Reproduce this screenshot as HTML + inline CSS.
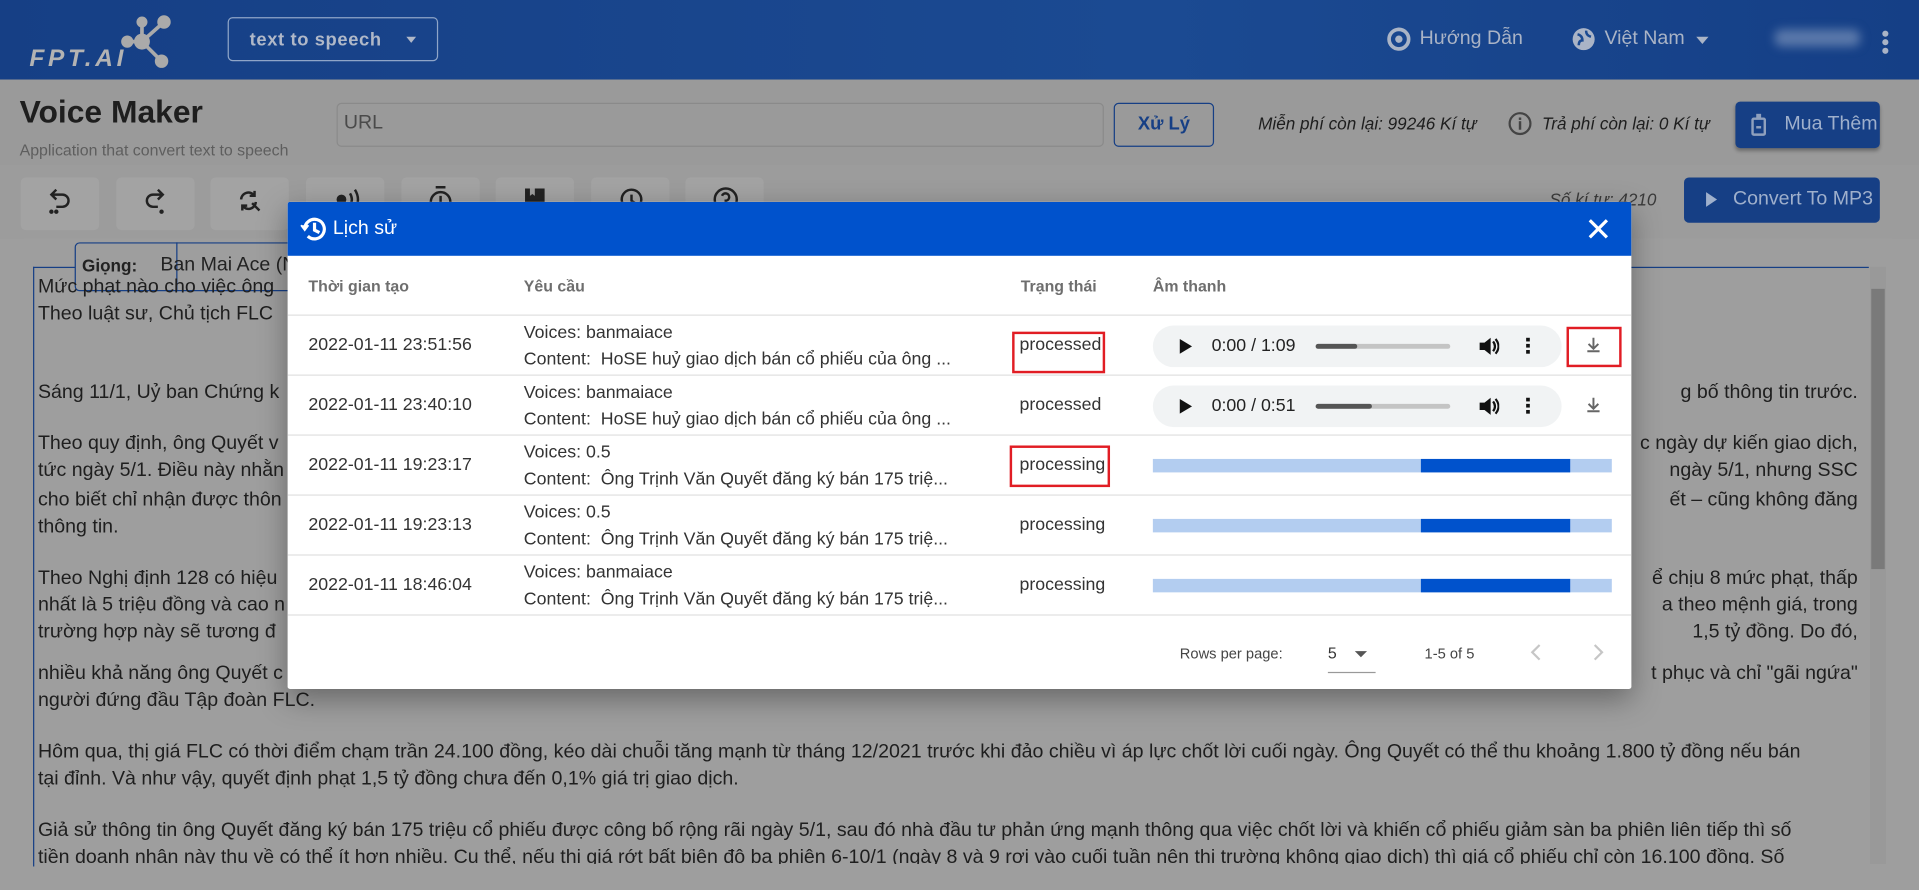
<!DOCTYPE html>
<html><head><meta charset="utf-8"><style>
*{box-sizing:border-box;margin:0;padding:0}
body{width:1919px;height:890px;overflow:hidden;background:#9e9e9e;font-family:"Liberation Sans",Arial,sans-serif;position:relative}
#w{position:absolute;left:0;top:0;width:1568px;height:727px;transform:scale(1.22385);transform-origin:0 0}
.a{position:absolute;white-space:nowrap}
.hdr{left:0;top:0;width:1568px;height:65px;background:linear-gradient(90deg,#163f85,#1b4a92 60%,#153f86);box-shadow:0 2px 6px rgba(0,0,0,.4)}
.tb{width:64px;height:43px;background:#a3a3a3;border-radius:4px;top:145px}
.tl{font-size:16px;color:#1e1e1e;left:31px}
.tr{font-size:16px;color:#1e1e1e;right:50px}
.hc{font-size:13px;font-weight:bold;color:#6e6e6e}
.c{font-size:14.5px;color:#333}
.row{position:absolute;left:0;width:1098px;height:49px;border-bottom:1px solid #e0e0e0}
.aud{position:absolute;left:707px;width:334px;height:34px;background:#f1f3f4;border-radius:17px;top:8px}
.prog{position:absolute;left:707px;width:375px;height:11px;background:#b3cdf0;top:19px}
.prog i{position:absolute;left:219px;width:122px;height:11px;background:#0052cc}
.red{position:absolute;border:2px solid #e11d24}
</style></head><body><div id="w">
<div class="a hdr"></div>
<div class="a" style="left:24px;top:37px;font-size:20px;font-weight:bold;color:#b3b3b3;letter-spacing:3px;font-style:italic">FPT.AI</div>
<svg class="a" style="left:94px;top:10px" width="46" height="48"><g stroke="#aaa" stroke-width="3" fill="#aaa"><line x1="22" y1="24" x2="40" y2="8"/><line x1="22" y1="24" x2="10" y2="24"/><line x1="22" y1="24" x2="38" y2="40"/><line x1="22" y1="24" x2="22" y2="8"/><circle cx="40" cy="8" r="4"/><circle cx="10" cy="24" r="3.5"/><circle cx="38" cy="40" r="4"/><circle cx="22" cy="8" r="3"/><circle cx="22" cy="24" r="5"/></g></svg>
<div class="a" style="left:186px;top:14px;width:172px;height:36px;border:1px solid #8fa5c8;border-radius:4px"></div>
<div class="a" style="left:204px;top:24px;font-size:15px;font-weight:bold;color:#b0b8c8;letter-spacing:.5px">text to speech</div>
<div class="a" style="left:332px;top:30px;border:4px solid transparent;border-top:5px solid #b0b8c8"></div>
<svg class="a" style="left:1133px;top:22px" width="20" height="20"><circle cx="10" cy="10" r="8" fill="none" stroke="#aab4c6" stroke-width="3"/><circle cx="10" cy="10" r="3" fill="#aab4c6"/></svg>
<div class="a" style="left:1160px;top:23px;font-size:16px;color:#aab4c6">Hướng Dẫn</div>
<svg class="a" style="left:1284px;top:22px" width="20" height="20"><circle cx="10" cy="10" r="9" fill="#aab4c6"/><path d="M5 6q4 1 4 5q-3 0-3 4M12 3q0 4 4 5" stroke="#1b4a92" stroke-width="2" fill="none"/></svg>
<div class="a" style="left:1311px;top:23px;font-size:16px;color:#aab4c6">Việt Nam</div>
<div class="a" style="left:1386px;top:30px;border:5px solid transparent;border-top:6px solid #aab4c6"></div>
<div class="a" style="left:1450px;top:24px;width:70px;height:14px;background:#5a78aa;filter:blur(4px);border-radius:6px"></div>
<div class="a" style="left:1538px;top:25px;width:5px;height:5px;border-radius:3px;background:#aab4c6;box-shadow:0 7px 0 #aab4c6,0 14px 0 #aab4c6"></div>

<div class="a" style="left:0;top:65px;width:1568px;height:70px;background:#9a9a9a"></div>
<div class="a" style="left:16px;top:76px;font-size:26px;font-weight:bold;color:#1e1e1e">Voice Maker</div>
<div class="a" style="left:16px;top:115px;font-size:13px;color:#5e5e5e">Application that convert text to speech</div>
<div class="a" style="left:275px;top:84px;width:627px;height:36px;border:1px solid #8a8a8a;border-radius:4px"></div>
<div class="a" style="left:281px;top:92px;font-size:16px;color:#4a4a4a">URL</div>
<div class="a" style="left:910px;top:84px;width:82px;height:36px;border:1px solid #163f85;border-radius:4px;font-size:15px;font-weight:bold;color:#163f85;text-align:center;line-height:34px">Xử Lý</div>
<div class="a" style="left:1028px;top:93px;font-size:14px;font-style:italic;color:#1e1e1e">Miễn phí còn lại: 99246 Kí tự</div>
<svg class="a" style="left:1232px;top:91px" width="20" height="20"><circle cx="10" cy="10" r="8.5" fill="none" stroke="#444" stroke-width="1.8"/><rect x="9" y="8" width="2" height="7" fill="#444"/><rect x="9" y="5" width="2" height="2" fill="#444"/></svg>
<div class="a" style="left:1260px;top:93px;font-size:14px;font-style:italic;color:#1e1e1e">Trả phí còn lại: 0 Kí tự</div>
<div class="a" style="left:1418px;top:83px;width:118px;height:38px;background:#163f85;border-radius:4px;box-shadow:0 2px 3px rgba(0,0,0,.3)"></div>
<svg class="a" style="left:1430px;top:92px" width="14" height="20"><rect x="2" y="5" width="10" height="13" rx="1" fill="none" stroke="#8fa0bd" stroke-width="2"/><rect x="5" y="1" width="4" height="4" fill="#8fa0bd"/><rect x="5" y="11" width="4" height="2" fill="#8fa0bd"/></svg>
<div class="a" style="left:1458px;top:93px;font-size:16px;color:#9fb0cc">Mua Thêm</div>

<div class="a" style="left:0;top:135px;width:1568px;height:60px;background:#9c9c9c"></div>
<div class="a tb" style="left:17px"></div><div class="a tb" style="left:95px"></div><div class="a tb" style="left:172px"></div><div class="a tb" style="left:250px"></div><div class="a tb" style="left:328px"></div><div class="a tb" style="left:405px"></div><div class="a tb" style="left:483px"></div><div class="a tb" style="left:560px"></div>
<svg class="a" style="left:38px;top:153px" width="22" height="24" fill="none" stroke="#222" stroke-width="2"><path d="M4 6h9a5 5 0 0 1 0 10H8M8 2 4 6l4 4"/><circle cx="4" cy="20" r=".8" fill="#222"/><circle cx="8" cy="20" r=".8" fill="#222"/></svg>
<svg class="a" style="left:116px;top:153px" width="22" height="24" fill="none" stroke="#222" stroke-width="2"><path d="M17 6H9a5 5 0 0 0 0 10h4M13 2l4 4-4 4"/><circle cx="16" cy="20" r=".8" fill="#222"/></svg>
<svg class="a" style="left:194px;top:153px" width="22" height="24" fill="none" stroke="#222" stroke-width="2"><path d="M3 10a6 6 0 0 1 11-3M15 12a6 6 0 0 1-11 3M14 3v4h-4M4 19v-4h4M12 13l6 6"/></svg>
<svg class="a" style="left:272px;top:153px" width="24" height="20"><circle cx="7" cy="10" r="4" fill="#222"/><path d="M14 5q3 5 0 10M18 2q5 8 0 16" stroke="#222" stroke-width="2" fill="none"/></svg>
<svg class="a" style="left:349px;top:151px" width="22" height="26" fill="none" stroke="#222" stroke-width="2"><path d="M7 2h8"/><circle cx="11" cy="14" r="8"/><path d="M11 9v6"/></svg>
<svg class="a" style="left:427px;top:152px" width="20" height="20"><path d="M2 2h16v16H2z" fill="#222"/><path d="M6 2v6l2-1.5 2 1.5V2" fill="#9c9c9c"/></svg>
<svg class="a" style="left:504px;top:152px" width="22" height="22" fill="none" stroke="#222" stroke-width="2"><circle cx="12" cy="11" r="8"/><path d="M12 7v5l3 2"/></svg>
<svg class="a" style="left:582px;top:152px" width="22" height="22" fill="none" stroke="#222" stroke-width="2"><circle cx="11" cy="11" r="9"/><path d="M8 8a3 3 0 1 1 3 4v2"/></svg>
<div class="a" style="left:1266px;top:155px;font-size:14px;font-style:italic;color:#3a3a3a">Số kí tự: 4210</div>
<div class="a" style="left:1376px;top:145px;width:160px;height:37px;background:#163f85;border-radius:4px"></div>
<div class="a" style="left:1394px;top:157px;border:6px solid transparent;border-left:9px solid #9fb0cc;border-right:0"></div>
<div class="a" style="left:1416px;top:154px;font-size:16px;color:#9fb0cc">Convert To MP3</div>

<div class="a" style="left:20px;top:195px;width:1526px;height:532px;background:#9e9e9e"></div>
<div class="a" style="left:27px;top:218px;width:1500px;height:490px;border-left:1px solid #163f85;border-top:1px solid #163f85"></div>
<div class="a" style="left:61px;top:198px;width:200px;height:40px;border:1px solid #163f85;border-radius:4px;background:#9e9e9e"></div>
<div class="a" style="left:61px;top:198px;width:84px;height:40px;border-right:1px solid #163f85"></div>
<div class="a" style="left:67px;top:209px;font-size:14px;font-weight:bold;color:#222">Giọng:</div>
<div class="a" style="left:131px;top:208px;font-size:16px;color:#222">Ban Mai Ace (N</div>
<div class="a" style="left:1528px;top:218px;width:13px;height:488px;background:#999"></div>
<div class="a" style="left:1529px;top:236px;width:11px;height:229px;background:#7a7a7a"></div>

<div class="a tl" style="top:226px">Mức phạt nào cho việc ông</div>
<div class="a tl" style="top:248px">Theo luật sư, Chủ tịch FLC</div>
<div class="a tl" style="top:312px">Sáng 11/1, Uỷ ban Chứng k</div><div class="a tr" style="top:312px">g bố thông tin trước.</div>
<div class="a tl" style="top:354px">Theo quy định, ông Quyết v</div><div class="a tr" style="top:354px">c ngày dự kiến giao dịch,</div>
<div class="a tl" style="top:376px">tức ngày 5/1. Điều này nhằn</div><div class="a tr" style="top:376px">ngày 5/1, nhưng SSC</div>
<div class="a tl" style="top:400px">cho biết chỉ nhận được thôn</div><div class="a tr" style="top:400px">ết – cũng không đăng</div>
<div class="a tl" style="top:422px">thông tin.</div>
<div class="a tl" style="top:464px">Theo Nghị định 128 có hiệu</div><div class="a tr" style="top:464px">ể chịu 8 mức phạt, thấp</div>
<div class="a tl" style="top:486px">nhất là 5 triệu đồng và cao n</div><div class="a tr" style="top:486px">a theo mệnh giá, trong</div>
<div class="a tl" style="top:508px">trường hợp này sẽ tương đ</div><div class="a tr" style="top:508px">1,5 tỷ đồng. Do đó,</div>
<div class="a tl" style="top:542px">nhiều khả năng ông Quyết c</div><div class="a tr" style="top:542px">t phục và chỉ "gãi ngứa"</div>
<div class="a tl" style="top:564px">người đứng đầu Tập đoàn FLC.</div>
<div class="a tl" style="top:606px">Hôm qua, thị giá FLC có thời điểm chạm trần 24.100 đồng, kéo dài chuỗi tăng mạnh từ tháng 12/2021 trước khi đảo chiều vì áp lực chốt lời cuối ngày. Ông Quyết có thể thu khoảng 1.800 tỷ đồng nếu bán</div>
<div class="a tl" style="top:628px">tại đỉnh. Và như vậy, quyết định phạt 1,5 tỷ đồng chưa đến 0,1% giá trị giao dịch.</div>
<div class="a tl" style="top:670px">Giả sử thông tin ông Quyết đăng ký bán 175 triệu cổ phiếu được công bố rộng rãi ngày 5/1, sau đó nhà đầu tư phản ứng mạnh thông qua việc chốt lời và khiến cổ phiếu giảm sàn ba phiên liên tiếp thì số</div>
<div class="a" style="left:28px;top:692px;width:1498px;height:14px;overflow:hidden"><div class="a" style="left:3px;top:0;font-size:16px;color:#1e1e1e">tiền doanh nhận này thu về có thể ít hơn nhiều. Cụ thể, nếu thị giá rớt bất biên độ ba phiên 6-10/1 (ngày 8 và 9 rơi vào cuối tuần nên thị trường không giao dịch) thì giá cổ phiếu chỉ còn 16.100 đồng. Số</div></div>

<div class="a" style="left:235px;top:165px;width:1098px;height:398px;background:#fff;box-shadow:0 8px 24px rgba(0,0,0,.35);border-radius:2px;overflow:hidden">
 <div class="a" style="left:0;top:0;width:1098px;height:44px;background:#0052cc"></div>
 <svg class="a" style="left:10px;top:11px" width="22" height="22" fill="none" stroke="#fff" stroke-width="2.6"><path d="M4 11a8 8 0 1 1 2.5 6"/><path d="M1 8l3 4 3-4" fill="#fff" stroke-width="1.5"/><path d="M12 6v6l4 2"/></svg>
 <div class="a" style="left:37px;top:13px;font-size:16px;color:#fff">Lịch sử</div>
 <svg class="a" style="left:1063px;top:14px" width="16" height="16" stroke="#fff" stroke-width="2.6"><path d="M1 1l14 14M15 1 1 15"/></svg>
 <div class="a hc" style="left:17px;top:61px">Thời gian tạo</div>
 <div class="a hc" style="left:193px;top:61px">Yêu cầu</div>
 <div class="a hc" style="left:599px;top:61px">Trạng thái</div>
 <div class="a hc" style="left:707px;top:61px">Âm thanh</div>
 <div class="a" style="left:0;top:92px;width:1098px;height:1px;background:#e0e0e0"></div>

 <div class="row" style="top:93px">
  <div class="a c" style="left:17px;top:16px">2022-01-11 23:51:56</div>
  <div class="a c" style="left:193px;top:6px">Voices: banmaiace</div>
  <div class="a c" style="left:193px;top:28px">Content:&nbsp; HoSE huỷ giao dịch bán cổ phiếu của ông ...</div>
  <div class="a c" style="left:598px;top:16px">processed</div>
  <div class="aud"></div>
 </div>
 <div class="row" style="top:142px">
  <div class="a c" style="left:17px;top:16px">2022-01-11 23:40:10</div>
  <div class="a c" style="left:193px;top:6px">Voices: banmaiace</div>
  <div class="a c" style="left:193px;top:28px">Content:&nbsp; HoSE huỷ giao dịch bán cổ phiếu của ông ...</div>
  <div class="a c" style="left:598px;top:16px">processed</div>
  <div class="aud"></div>
 </div>
 <div class="row" style="top:191px">
  <div class="a c" style="left:17px;top:16px">2022-01-11 19:23:17</div>
  <div class="a c" style="left:193px;top:6px">Voices: 0.5</div>
  <div class="a c" style="left:193px;top:28px">Content:&nbsp; Ông Trịnh Văn Quyết đăng ký bán 175 triệ...</div>
  <div class="a c" style="left:598px;top:16px">processing</div>
  <div class="prog"><i></i></div>
 </div>
 <div class="row" style="top:240px">
  <div class="a c" style="left:17px;top:16px">2022-01-11 19:23:13</div>
  <div class="a c" style="left:193px;top:6px">Voices: 0.5</div>
  <div class="a c" style="left:193px;top:28px">Content:&nbsp; Ông Trịnh Văn Quyết đăng ký bán 175 triệ...</div>
  <div class="a c" style="left:598px;top:16px">processing</div>
  <div class="prog"><i></i></div>
 </div>
 <div class="row" style="top:289px">
  <div class="a c" style="left:17px;top:16px">2022-01-11 18:46:04</div>
  <div class="a c" style="left:193px;top:6px">Voices: banmaiace</div>
  <div class="a c" style="left:193px;top:28px">Content:&nbsp; Ông Trịnh Văn Quyết đăng ký bán 175 triệ...</div>
  <div class="a c" style="left:598px;top:16px">processing</div>
  <div class="prog"><i></i></div>
 </div>

 <div class="a" style="left:0;top:93px;width:1098px;height:98px">
  <div class="a" style="left:729px;top:19px;border:6px solid transparent;border-left:10px solid #111;border-right:0"></div>
  <div class="a c" style="left:755px;top:17px;color:#222">0:00 / 1:09</div>
  <div class="a" style="left:840px;top:23px;width:110px;height:4px;background:#c4c4c4;border-radius:2px"><i class="a" style="left:0;top:0;width:34px;height:4px;background:#555;border-radius:2px"></i></div>
  <svg class="a" style="left:972px;top:16px" width="18" height="18"><path d="M2 6h4l5-4v14l-5-4H2z" fill="#111"/><path d="M13 5q3 4 0 8M15 3q5 6 0 12" stroke="#111" stroke-width="1.8" fill="none"/></svg>
  <div class="a" style="left:1012px;top:18px;width:3px;height:3px;background:#111;box-shadow:0 5px 0 #111,0 10px 0 #111"></div>
  <svg class="a" style="left:1061px;top:17px" width="12" height="14"><path d="M6 1v8M2 6l4 4 4-4M1 12h10" stroke="#666" stroke-width="1.6" fill="none"/></svg>
  <div class="a" style="left:729px;top:68px;border:6px solid transparent;border-left:10px solid #111;border-right:0"></div>
  <div class="a c" style="left:755px;top:66px;color:#222">0:00 / 0:51</div>
  <div class="a" style="left:840px;top:72px;width:110px;height:4px;background:#c4c4c4;border-radius:2px"><i class="a" style="left:0;top:0;width:46px;height:4px;background:#555;border-radius:2px"></i></div>
  <svg class="a" style="left:972px;top:65px" width="18" height="18"><path d="M2 6h4l5-4v14l-5-4H2z" fill="#111"/><path d="M13 5q3 4 0 8M15 3q5 6 0 12" stroke="#111" stroke-width="1.8" fill="none"/></svg>
  <div class="a" style="left:1012px;top:67px;width:3px;height:3px;background:#111;box-shadow:0 5px 0 #111,0 10px 0 #111"></div>
  <svg class="a" style="left:1061px;top:66px" width="12" height="14"><path d="M6 1v8M2 6l4 4 4-4M1 12h10" stroke="#666" stroke-width="1.6" fill="none"/></svg>
 </div>

 <div class="red" style="left:592px;top:106px;width:76px;height:34px"></div>
 <div class="red" style="left:1045px;top:102px;width:45px;height:33px"></div>
 <div class="red" style="left:590px;top:199px;width:82px;height:34px"></div>

 <div class="a" style="left:729px;top:362px;font-size:12px;color:#444">Rows per page:</div>
 <div class="a" style="left:850px;top:361px;font-size:13px;color:#333">5</div>
 <div class="a" style="left:872px;top:367px;border:5px solid transparent;border-top:5px solid #555"></div>
 <div class="a" style="left:850px;top:384px;width:39px;height:1px;background:#999"></div>
 <div class="a" style="left:929px;top:362px;font-size:12px;color:#444">1-5 of 5</div>
 <svg class="a" style="left:1014px;top:361px" width="12" height="14"><path d="M9 1 3 7l6 6" stroke="#c6c6c6" stroke-width="1.8" fill="none"/></svg>
 <svg class="a" style="left:1065px;top:361px" width="12" height="14"><path d="M3 1l6 6-6 6" stroke="#c6c6c6" stroke-width="1.8" fill="none"/></svg>
</div>
</div></body></html>
